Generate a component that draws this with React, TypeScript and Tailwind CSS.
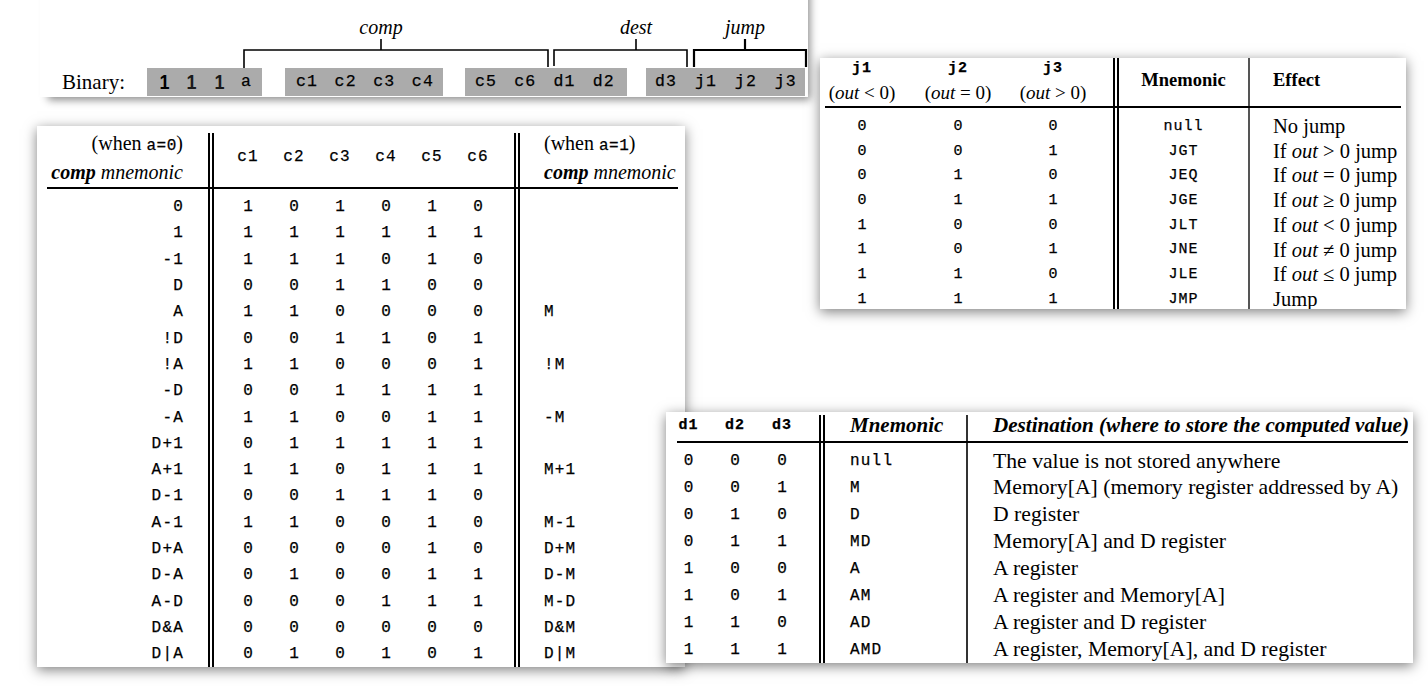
import React from "react";

const SERIF = "font-['Liberation_Serif','Times_New_Roman',serif]";
const MONO = "font-['Liberation_Mono','Courier_New',monospace] text-black [-webkit-text-stroke:0.25px_#000]";

function Dbl() {
  return <div className="border-x-2 border-black" />;
}

/* ---------------- Binary panel ---------------- */
function Token({ children }: { children: React.ReactNode }) {
  return <span className={MONO + " text-[16.5px] tracking-[1.2px]"}>{children}</span>;
}

function One({ dark }: { dark?: boolean }) {
  return (
    <span className={"font-['Liberation_Sans',Arial,sans-serif] font-bold text-[20px] scale-x-90 " + (dark ? "text-black" : "text-[#1a1a1a]")}>
      1
    </span>
  );
}

function BinaryPanel() {
  return (
    <div className="absolute left-[40px] top-[-20px] w-[768px] h-[117px] bg-white shadow-[5px_6px_8px_-3px_rgba(0,0,0,0.45)] flex flex-col">
      <div className="relative h-[88px]">
        <svg className="absolute inset-0" width="768" height="88" viewBox="40 -20 768 88">
          <g stroke="#000" strokeWidth="1.6" fill="none">
            <path d="M244 68 V50 H548 V67" />
            <path d="M381 50 V39" />
            <path d="M554 66 V50 H687 V67" />
            <path d="M636 50 V39" />
          </g>
          <g stroke="#000" strokeWidth="2.2" fill="none">
            <path d="M694 67 V50 H806 V67" />
            <path d="M745 50 V39" />
          </g>
        </svg>
        <span className={SERIF + " absolute left-[341px] top-[35px] -translate-x-1/2 italic text-[20px] leading-[24px]"}>comp</span>
        <span className={SERIF + " absolute left-[596px] top-[35px] -translate-x-1/2 italic text-[20px] leading-[24px]"}>dest</span>
        <span className={SERIF + " absolute left-[705px] top-[35px] -translate-x-1/2 italic text-[20px] leading-[24px]"}>jump</span>
      </div>
      <div className="flex h-[28px] items-stretch pl-[22px] leading-none">
        <div className={SERIF + " w-[85px] flex items-center text-[21px]"}>Binary:</div>
        <div className="w-[115px] bg-[#ababab] flex items-center justify-between pl-[12px] pr-[10px]">
          <One dark />
          <One />
          <One />
          <Token>a</Token>
        </div>
        <div className="ml-[23px] w-[158px] bg-[#ababab] flex items-center justify-between pl-[11px] pr-[9px]">
          <Token>c1</Token>
          <Token>c2</Token>
          <Token>c3</Token>
          <Token>c4</Token>
        </div>
        <div className="ml-[22px] w-[162px] bg-[#ababab] flex items-center justify-between pl-[10px] pr-[12px]">
          <Token>c5</Token>
          <Token>c6</Token>
          <Token>d1</Token>
          <Token>d2</Token>
        </div>
        <div className="ml-[19px] w-[159px] bg-[#ababab] flex items-center justify-between pl-[9px] pr-[8px]">
          <Token>d3</Token>
          <Token>j1</Token>
          <Token>j2</Token>
          <Token>j3</Token>
        </div>
      </div>
    </div>
  );
}

/* ---------------- Comp table ---------------- */
const COMP_COLS = "grid grid-cols-[161px_6px_11px_repeat(6,46px)_13px_6px_1fr]";

const compRows: [string, string, string][] = [
  ["0", "101010", ""],
  ["1", "111111", ""],
  ["-1", "111010", ""],
  ["D", "001100", ""],
  ["A", "110000", "M"],
  ["!D", "001101", ""],
  ["!A", "110001", "!M"],
  ["-D", "001111", ""],
  ["-A", "110011", "-M"],
  ["D+1", "011111", ""],
  ["A+1", "110111", "M+1"],
  ["D-1", "001110", ""],
  ["A-1", "110010", "M-1"],
  ["D+A", "000010", "D+M"],
  ["D-A", "010011", "D-M"],
  ["A-D", "000111", "M-D"],
  ["D&A", "000000", "D&M"],
  ["D|A", "010101", "D|M"],
];

function CompHeaderText({ a, right }: { a: string; right?: boolean }) {
  return (
    <div className={SERIF + " flex flex-col text-[20px] leading-[26px] mt-[-3px] " + (right ? "items-end" : "items-start")}>
      <span className="whitespace-pre">
        (when <span className={MONO + " text-[16px] tracking-[0.5px]"}>a=</span>
        <span className={MONO + " text-[16px]"}>{a}</span>)
      </span>
      <span className="whitespace-pre">
        <span className="font-bold italic">comp</span> <span className="italic">mnemonic</span>
      </span>
    </div>
  );
}

function CompPanel() {
  return (
    <div className="absolute left-[37px] top-[126px] w-[648px] h-[541px] bg-white shadow-[0_3px_12px_rgba(0,0,0,0.5)] pl-[10px] pr-[7px] pt-[7px]">
      <div className={COMP_COLS + " h-[56px] border-b-2 border-black"}>
        <div className="flex justify-end pr-[25px]">
          <CompHeaderText a="0" right />
        </div>
        <Dbl />
        <div />
        {["c1", "c2", "c3", "c4", "c5", "c6"].map((c) => (
          <div key={c} className={MONO + " flex items-center justify-center pb-[6px] text-[16px] tracking-[1.2px] leading-none"}>
            {c}
          </div>
        ))}
        <div />
        <Dbl />
        <div className="pl-[24px]">
          <CompHeaderText a="1" />
        </div>
      </div>
      <div className={COMP_COLS + " h-[5px]"}>
        <div />
        <Dbl />
        <div />
        <div />
        <div />
        <div />
        <div />
        <div />
        <div />
        <div />
        <Dbl />
        <div />
      </div>
      {compRows.map(([m, bits, m2]) => (
        <div key={m} className={COMP_COLS + " h-[26.3px] text-[16px] leading-none " + MONO}>
          <div className="flex items-center justify-end pr-[24px] tracking-[1.2px] whitespace-pre">{m}</div>
          <Dbl />
          <div />
          {bits.split("").map((b, i) => (
            <div key={i} className="flex items-center justify-center">
              {b}
            </div>
          ))}
          <div />
          <Dbl />
          <div className="flex items-center pl-[24px] tracking-[1.2px] whitespace-pre">{m2}</div>
        </div>
      ))}
    </div>
  );
}

/* ---------------- Jump table ---------------- */
const JUMP_COLS = "grid grid-cols-[74px_118px_72px_24px_6px_129px_1fr]";

const jumpRows: [string, string, React.ReactNode][] = [
  ["000", "null", <>No jump</>],
  ["001", "JGT", <>If <i>out</i> &gt; 0 jump</>],
  ["010", "JEQ", <>If <i>out</i> = 0 jump</>],
  ["011", "JGE", <>If <i>out</i> ≥ 0 jump</>],
  ["100", "JLT", <>If <i>out</i> &lt; 0 jump</>],
  ["101", "JNE", <>If <i>out</i> ≠ 0 jump</>],
  ["110", "JLE", <>If <i>out</i> ≤ 0 jump</>],
  ["111", "JMP", <>Jump</>],
];

function JumpHead({ j, op }: { j: string; op: string }) {
  return (
    <div className="flex flex-col items-center mt-[-1px] leading-[24px]">
      <span className={MONO + " font-bold text-[15px] tracking-[1px]"}>{j}</span>
      <span className={SERIF + " text-[19px] whitespace-pre"}>
        (<i>out</i> {op} 0)
      </span>
    </div>
  );
}

function JumpPanel() {
  return (
    <div className="absolute left-[820px] top-[58px] w-[586px] h-[251px] overflow-hidden bg-white shadow-[0_3px_12px_rgba(0,0,0,0.5)] px-[5px]">
      <div className={JUMP_COLS + " h-[50px] border-b-2 border-black"}>
        <JumpHead j="j1" op="<" />
        <JumpHead j="j2" op="=" />
        <JumpHead j="j3" op=">" />
        <div />
        <Dbl />
        <div className={SERIF + " flex items-center justify-center pb-[4px] font-bold text-[18.5px] leading-none"}>Mnemonic</div>
        <div className={SERIF + " flex items-center pb-[4px] pl-[23px] border-l-2 border-[#555] font-bold text-[18.5px] leading-none"}>Effect</div>
      </div>
      <div className={JUMP_COLS + " h-[6px]"}>
        <div />
        <div />
        <div />
        <div />
        <Dbl />
        <div />
        <div className="border-l-2 border-[#555]" />
      </div>
      {jumpRows.map(([bits, m, eff]) => (
        <div key={m} className={JUMP_COLS + " h-[24.7px] leading-none"}>
          {bits.split("").map((b, i) => (
            <div key={i} className={MONO + " flex items-center justify-center text-[15px]"}>
              {b}
            </div>
          ))}
          <div />
          <Dbl />
          <div className={MONO + " flex items-center justify-center text-[15px] tracking-[1px]"}>{m}</div>
          <div className={SERIF + " flex items-center pl-[23px] border-l-2 border-[#555] text-[20.5px] whitespace-nowrap"}>
            <span className="whitespace-pre">{eff}</span>
          </div>
        </div>
      ))}
    </div>
  );
}

/* ---------------- Dest table ---------------- */
const DEST_COLS = "grid grid-cols-[23px_70px_24px_25px_6px_141px_1fr]";

const destRows: [string, string, string][] = [
  ["000", "null", "The value is not stored anywhere"],
  ["001", "M", "Memory[A] (memory register addressed by A)"],
  ["010", "D", "D register"],
  ["011", "MD", "Memory[A] and D register"],
  ["100", "A", "A register"],
  ["101", "AM", "A register and Memory[A]"],
  ["110", "AD", "A register and D register"],
  ["111", "AMD", "A register, Memory[A], and D register"],
];

function DestPanel() {
  return (
    <div className="absolute left-[666px] top-[412px] w-[747px] h-[251px] overflow-hidden bg-white shadow-[0_3px_12px_rgba(0,0,0,0.5)] pl-[11px] pr-[5px] pt-[3px]">
      <div className={DEST_COLS + " h-[28px] border-b-2 border-black leading-none"}>
        {["d1", "d2", "d3"].map((d) => (
          <div key={d} className={MONO + " flex items-center justify-center pb-[5px] font-bold text-[15px] tracking-[1px]"}>
            {d}
          </div>
        ))}
        <div />
        <Dbl />
        <div className={SERIF + " flex items-center pb-[5px] pl-[25px] font-bold italic text-[21px]"}>Mnemonic</div>
        <div className={SERIF + " flex items-center pb-[5px] pl-[25px] border-l-2 border-[#333] font-bold italic text-[21.1px] whitespace-nowrap"}>
          Destination (where to store the computed value)
        </div>
      </div>
      <div className={DEST_COLS + " h-[5px]"}>
        <div />
        <div />
        <div />
        <div />
        <Dbl />
        <div />
        <div className="border-l-2 border-[#333]" />
      </div>
      {destRows.map(([bits, m, d]) => (
        <div key={m} className={DEST_COLS + " h-[26.9px] leading-none"}>
          {bits.split("").map((b, i) => (
            <div key={i} className={MONO + " flex items-center justify-center text-[16px]"}>
              {b}
            </div>
          ))}
          <div />
          <Dbl />
          <div className={MONO + " flex items-center pl-[25px] text-[16px] tracking-[1.2px]"}>{m}</div>
          <div className={SERIF + " flex items-center pl-[25px] border-l-2 border-[#333] text-[21.7px] whitespace-nowrap"}>{d}</div>
        </div>
      ))}
    </div>
  );
}

export default function App() {
  return (
    <div className="relative w-[1428px] h-[686px] overflow-hidden bg-white text-black">
      <BinaryPanel />
      <CompPanel />
      <JumpPanel />
      <DestPanel />
    </div>
  );
}
